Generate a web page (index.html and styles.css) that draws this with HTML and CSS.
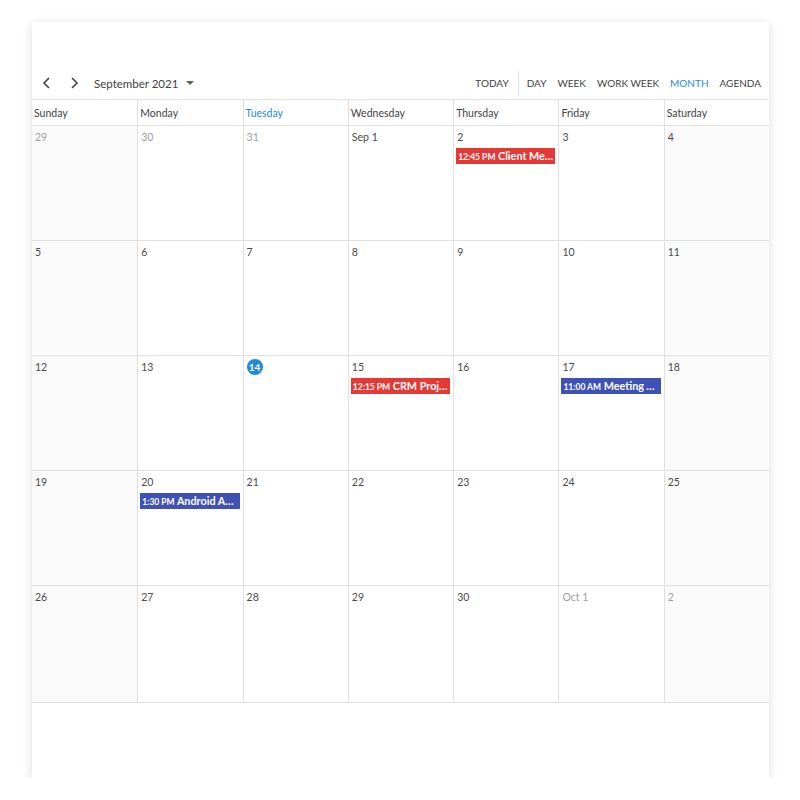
FILE: index.html
```html
<!DOCTYPE html>
<html>
<head>
<meta charset="utf-8">
<link rel="stylesheet" href="styles.css">
</head>
<body>
<div class="card">
  <div class="toolbar">
    <div class="left">
      <button class="nav"><svg width="16" height="16" viewBox="0 0 16 16"><path d="M10 3 L5 8 L10 13" fill="none" stroke="#424242" stroke-width="1.6"/></svg></button>
      <button class="nav"><svg width="16" height="16" viewBox="0 0 16 16"><path d="M6 3 L11 8 L6 13" fill="none" stroke="#424242" stroke-width="1.6"/></svg></button>
      <span class="month">September 2021</span>
      <svg class="caret" width="10" height="10" viewBox="0 0 10 10"><path d="M1 3 L9 3 L5 7 Z" fill="#616161"/></svg>
    </div>
    <div class="right">
      <span class="vbtn">TODAY</span>
      <span class="sep"></span>
      <span class="vbtn">DAY</span>
      <span class="vbtn">WEEK</span>
      <span class="vbtn">WORK WEEK</span>
      <span class="vbtn active">MONTH</span>
      <span class="vbtn">AGENDA</span>
    </div>
  </div>
  <div class="head">
    <div class="hcell">Sunday</div>
    <div class="hcell">Monday</div>
    <div class="hcell today">Tuesday</div>
    <div class="hcell">Wednesday</div>
    <div class="hcell">Thursday</div>
    <div class="hcell">Friday</div>
    <div class="hcell">Saturday</div>
  </div>
  <div class="grid">
    <div class="cell we"><span class="d other">29</span></div>
    <div class="cell"><span class="d other">30</span></div>
    <div class="cell"><span class="d other">31</span></div>
    <div class="cell"><span class="d">Sep 1</span></div>
    <div class="cell"><span class="d">2</span><div class="ev red"><span class="t">12:45 PM</span> Client Meeting</div></div>
    <div class="cell"><span class="d">3</span></div>
    <div class="cell we"><span class="d">4</span></div>

    <div class="cell we"><span class="d">5</span></div>
    <div class="cell"><span class="d">6</span></div>
    <div class="cell"><span class="d">7</span></div>
    <div class="cell"><span class="d">8</span></div>
    <div class="cell"><span class="d">9</span></div>
    <div class="cell"><span class="d">10</span></div>
    <div class="cell we"><span class="d">11</span></div>

    <div class="cell we"><span class="d">12</span></div>
    <div class="cell"><span class="d">13</span></div>
    <div class="cell"><span class="d now">14</span></div>
    <div class="cell"><span class="d">15</span><div class="ev red"><span class="t">12:15 PM</span> CRM Project</div></div>
    <div class="cell"><span class="d">16</span></div>
    <div class="cell"><span class="d">17</span><div class="ev blue"><span class="t">11:00 AM</span> Meeting with team</div></div>
    <div class="cell we"><span class="d">18</span></div>

    <div class="cell we"><span class="d">19</span></div>
    <div class="cell"><span class="d">20</span><div class="ev blue"><span class="t">1:30 PM</span> Android App Review</div></div>
    <div class="cell"><span class="d">21</span></div>
    <div class="cell"><span class="d">22</span></div>
    <div class="cell"><span class="d">23</span></div>
    <div class="cell"><span class="d">24</span></div>
    <div class="cell we"><span class="d">25</span></div>

    <div class="cell we"><span class="d">26</span></div>
    <div class="cell"><span class="d">27</span></div>
    <div class="cell"><span class="d">28</span></div>
    <div class="cell"><span class="d">29</span></div>
    <div class="cell"><span class="d">30</span></div>
    <div class="cell"><span class="d other">Oct 1</span></div>
    <div class="cell we"><span class="d other">2</span></div>
  </div>
</div>
</body>
</html>
```

FILE: styles.css
```css
html, body { margin: 0; padding: 0; background: #fff; }
body { font-family: Lato, "Open Sans", Arial, sans-serif; color: #424242; }
.card {
  margin: 22px 0 0 32px;
  width: 737px;
  height: 756px;
  background: #fff;
  box-shadow: 0 2px 10px rgba(0,0,0,0.14);
  padding-top: 43px;
  box-sizing: border-box;
}
.toolbar {
  height: 35px;
  display: flex;
  align-items: center;
  justify-content: space-between;
  border-bottom: 1px solid #e0e0e0;
  padding: 2px 8px 0 7px;
  box-sizing: border-box;
}
.left { display: flex; align-items: center; }
.nav {
  border: 0; background: none; padding: 0; width: 16px; height: 16px;
  margin-right: 11px; display: flex;
}
.month { font-size: 11.5px; color: #424242; margin-left: 1px; }
.caret { margin-left: 7px; }
.right { display: flex; align-items: center; font-size: 10px; color: #424242; }
.vbtn { margin-left: 11px; }
.vbtn:first-child { margin-left: 0; }
.vbtn.active { color: #1e88e5; }
.sep { width: 1px; height: 24px; background: #e0e0e0; margin-left: 9px; margin-right: -3px; }
.head, .grid { display: grid; grid-template-columns: repeat(7, 1fr); }
.hcell {
  height: 25px; line-height: 26px; font-size: 10.5px; padding-left: 2px;
  border-left: 1px solid #e0e0e0; border-bottom: 1px solid #e0e0e0;
}
.hcell:first-child { border-left: 0; }
.hcell.today { color: #1e88e5; }
.grid { grid-template-rows: repeat(4, 115px) 117px; }
.cell {
  border-left: 1px solid #e0e0e0; border-bottom: 1px solid #e0e0e0;
  padding: 4px 2px 0 2px; min-width: 0; overflow: hidden; background: #fff;
  font-size: 10.5px; line-height: 14px;
}
.cell:nth-child(7n+1) { border-left: 0; padding-left: 2px; }
.cell.we { background: #fafafa; }
.d { font-size: 10.5px; line-height: 14px; height: 14px; color: #4a4a4a; display: block; padding-left: 1px; }
.d.other { color: #9e9e9e; }
.d.now {
  width: 16px; height: 16px; border-radius: 50%; background: #1e88e5; color: #fff;
  font-weight: bold; font-size: 10px; line-height: 16px; text-align: center; padding: 0;
  margin: -1px 0 -1px 1px;
}
.ev {
  margin-top: 4px; margin-right: 1px; height: 16px; line-height: 16px;
  color: #fff; font-size: 10.8px; font-weight: bold; padding-left: 2px;
  white-space: nowrap; overflow: hidden; text-overflow: ellipsis;
}
.ev .t { font-size: 8.5px; }
.ev.red { background: #e53935; }
.ev.blue { background: #3f51b5; }
```
